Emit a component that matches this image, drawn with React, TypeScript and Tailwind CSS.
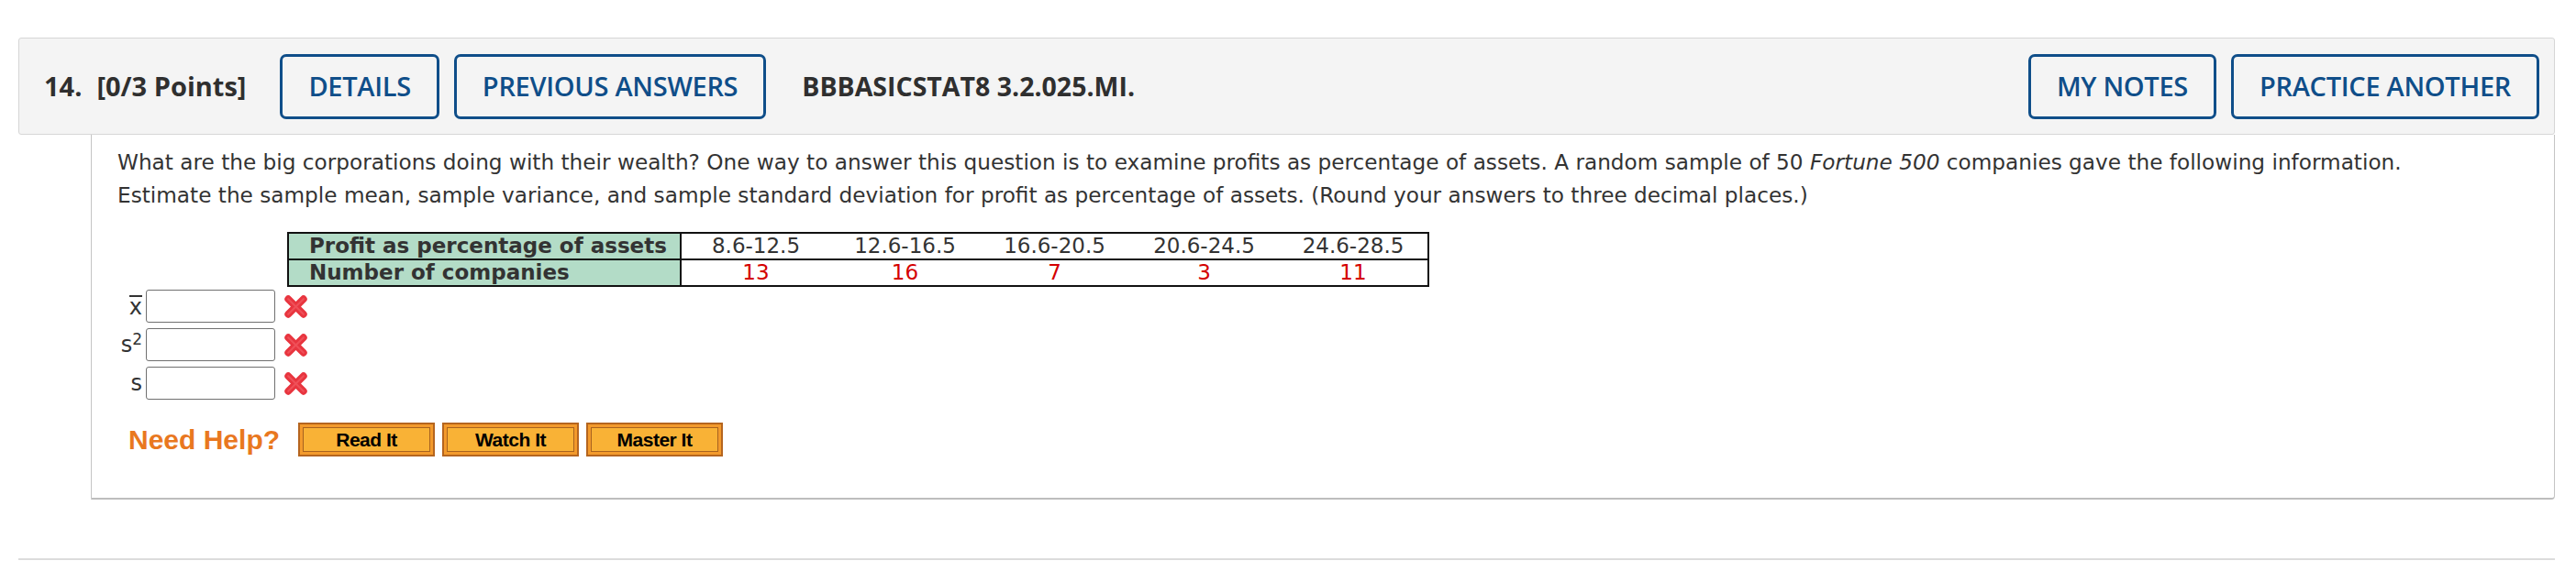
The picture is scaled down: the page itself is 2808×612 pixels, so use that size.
import React from "react";

const ranges = ["8.6-12.5", "12.6-16.5", "16.6-20.5", "20.6-24.5", "24.6-28.5"];
const counts = ["13", "16", "7", "3", "11"];

function HeaderButton({ label }: { label: string }) {
  return (
    <button className="h-[71px] rounded-[7px] border-[3px] border-[#0f4e89] px-[28px] text-[29px] font-semibold tracking-[-0.3px] text-[#0f4e89]">
      {label}
    </button>
  );
}

function WrongMark() {
  return (
    <svg width="27" height="27" viewBox="0 0 26 26" className="shrink-0">
      <path
        d="M5 5 L21 21 M21 5 L5 21"
        stroke="#e8353f"
        strokeWidth="7.5"
        strokeLinecap="round"
      />
      <path
        d="M5 5 L21 21 M21 5 L5 21"
        stroke="#f5666d"
        strokeWidth="2"
        strokeLinecap="round"
        opacity="0.55"
      />
    </svg>
  );
}

function HelpButton({ label }: { label: string }) {
  return (
    <button className="h-[37px] w-[149px] border-2 border-[#b5651f] bg-[#f39a2c] p-[3px]">
      <span className="flex h-full w-full items-center justify-center border border-[#a8621f] bg-[#f9b236] text-[21px] font-bold tracking-[-0.5px] text-black">
        {label}
      </span>
    </button>
  );
}

export default function App() {
  const answers = [
    { key: "xbar", label: <span className="border-t-2 border-[#333] leading-[22px]">x</span> },
    {
      key: "s2",
      label: (
        <span>
          s<sup className="text-[17px]">2</sup>
        </span>
      ),
    },
    { key: "s", label: <span>s</span> },
  ];

  return (
    <div className="h-[612px] w-[2808px] bg-white pl-[20px] pt-[41px]">
      <div className="w-[2765px]">
        {/* question header */}
        <div className="flex h-[106px] items-center rounded-[3px] border border-[#d6d6d6] bg-[#f4f4f4] pl-[27px] pr-[16px] font-['Open_Sans',sans-serif]">
          <span className="text-[29px] font-bold text-[#2f2f2f]">14.</span>
          <span className="ml-[16px] text-[29px] font-bold text-[#2f2f2f]">[0/3 Points]</span>
          <div className="ml-[37px] flex gap-[16px]">
            <HeaderButton label="DETAILS" />
            <HeaderButton label="PREVIOUS ANSWERS" />
          </div>
          <span className="ml-[39px] text-[28.5px] font-bold text-[#2f2f2f]">BBBASICSTAT8 3.2.025.MI.</span>
          <div className="ml-auto flex gap-[16px]">
            <HeaderButton label="MY NOTES" />
            <HeaderButton label="PRACTICE ANOTHER" />
          </div>
        </div>

        {/* question body */}
        <div className="ml-[79px] h-[398px] rounded-br-[4px] border-x border-b-2 border-[#c4c4c4] border-b-[#bdbdbd] pl-[28px] pt-[12px] font-['DejaVu_Sans',sans-serif] text-[#333]">
          <p className="text-[23.2px] leading-[36px]">
            What are the big corporations doing with their wealth? One way to answer this question is to examine profits as
            percentage of assets. A random sample of 50 <i>Fortune 500</i> companies gave the following information.
            <br />
            Estimate the sample mean, sample variance, and sample standard deviation for profit as percentage of assets. (Round
            your answers to three decimal places.)
          </p>

          <table className="ml-[185px] mt-[22px] border-collapse border-2 border-[#111] text-[23px]">
            <tbody>
              <tr className="h-[29px]">
                <td className="w-[428px] border-2 border-[#111] bg-[#b3dcc7] pl-[22px] font-bold leading-[25px]">
                  Profit as percentage of assets
                </td>
                {ranges.map((r) => (
                  <td key={r} className="w-[163px] text-center leading-[25px]">
                    {r}
                  </td>
                ))}
              </tr>
              <tr className="h-[29px] border-t-2 border-[#111]">
                <td className="border-2 border-[#111] bg-[#b3dcc7] pl-[22px] font-bold leading-[25px]">
                  Number of companies
                </td>
                {counts.map((c, i) => (
                  <td key={i} className="text-center leading-[25px] text-[#d40000]">
                    {c}
                  </td>
                ))}
              </tr>
            </tbody>
          </table>

          <div className="mt-[3px] flex flex-col gap-[6px]">
            {answers.map((a) => (
              <div key={a.key} className="flex h-[36px] items-center">
                <div className="flex w-[27px] justify-end text-[24px] text-[#333]">{a.label}</div>
                <div className="ml-[4px] h-[36px] w-[141px] rounded-[3px] border border-[#707070] bg-white" />
                <div className="ml-[9px]">
                  <WrongMark />
                </div>
              </div>
            ))}
          </div>

          <div className="ml-[12px] mt-[25px] flex items-center font-['Liberation_Sans',sans-serif]">
            <span className="text-[30px] font-bold leading-[37px] text-[#e9781f]">Need Help?</span>
            <div className="ml-[20px] flex gap-[8px]">
              <HelpButton label="Read It" />
              <HelpButton label="Watch It" />
              <HelpButton label="Master It" />
            </div>
          </div>
        </div>
      </div>
      <div className="mt-[64px] h-[2px] w-[2765px] bg-[#dcdcdc]" />
    </div>
  );
}
